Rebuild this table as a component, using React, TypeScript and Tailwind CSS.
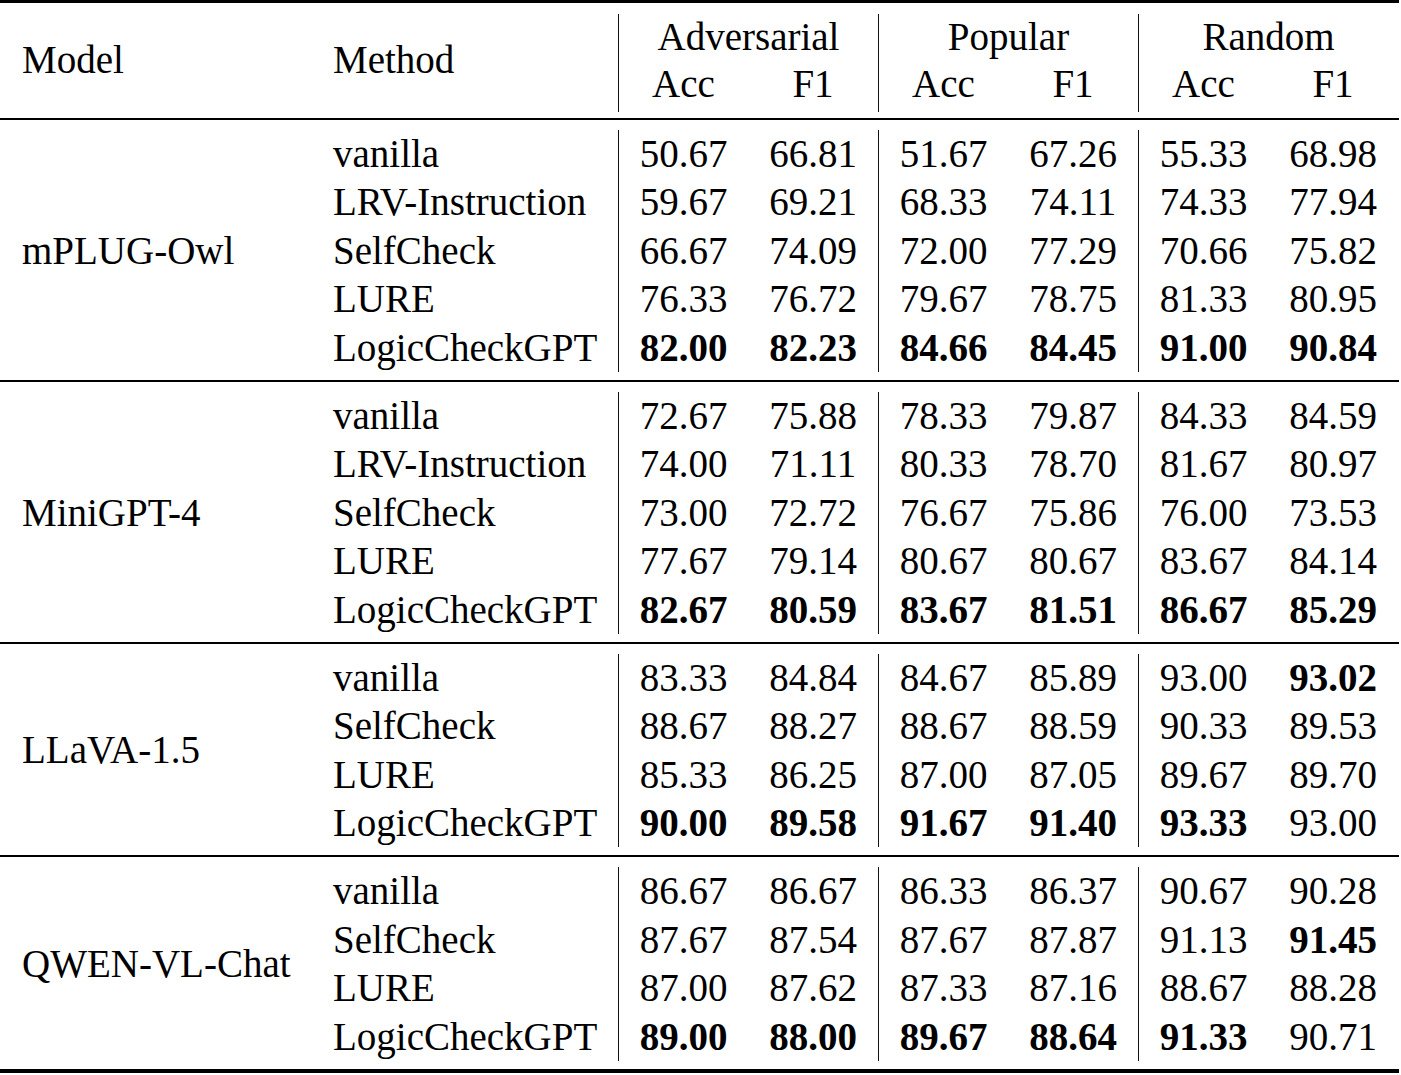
const groups: { model: string; rows: [string, string[]][] }[] = [
  {
    model: "mPLUG-Owl",
    rows: [
      ["vanilla", ["50.67", "66.81", "51.67", "67.26", "55.33", "68.98"]],
      ["LRV-Instruction", ["59.67", "69.21", "68.33", "74.11", "74.33", "77.94"]],
      ["SelfCheck", ["66.67", "74.09", "72.00", "77.29", "70.66", "75.82"]],
      ["LURE", ["76.33", "76.72", "79.67", "78.75", "81.33", "80.95"]],
      ["LogicCheckGPT", ["*82.00", "*82.23", "*84.66", "*84.45", "*91.00", "*90.84"]],
    ],
  },
  {
    model: "MiniGPT-4",
    rows: [
      ["vanilla", ["72.67", "75.88", "78.33", "79.87", "84.33", "84.59"]],
      ["LRV-Instruction", ["74.00", "71.11", "80.33", "78.70", "81.67", "80.97"]],
      ["SelfCheck", ["73.00", "72.72", "76.67", "75.86", "76.00", "73.53"]],
      ["LURE", ["77.67", "79.14", "80.67", "80.67", "83.67", "84.14"]],
      ["LogicCheckGPT", ["*82.67", "*80.59", "*83.67", "*81.51", "*86.67", "*85.29"]],
    ],
  },
  {
    model: "LLaVA-1.5",
    rows: [
      ["vanilla", ["83.33", "84.84", "84.67", "85.89", "93.00", "*93.02"]],
      ["SelfCheck", ["88.67", "88.27", "88.67", "88.59", "90.33", "89.53"]],
      ["LURE", ["85.33", "86.25", "87.00", "87.05", "89.67", "89.70"]],
      ["LogicCheckGPT", ["*90.00", "*89.58", "*91.67", "*91.40", "*93.33", "93.00"]],
    ],
  },
  {
    model: "QWEN-VL-Chat",
    rows: [
      ["vanilla", ["86.67", "86.67", "86.33", "86.37", "90.67", "90.28"]],
      ["SelfCheck", ["87.67", "87.54", "87.67", "87.87", "91.13", "*91.45"]],
      ["LURE", ["87.00", "87.62", "87.33", "87.16", "88.67", "88.28"]],
      ["LogicCheckGPT", ["*89.00", "*88.00", "*89.67", "*88.64", "*91.33", "90.71"]],
    ],
  },
];

const cols = "grid grid-cols-[311px_307px_repeat(6,130px)]";

function Group({ model, rows }: { model: string; rows: [string, string[]][] }) {
  return (
    <div className="border-t-2 border-black pt-[10px] pb-[8px]">
      <div className={cols} style={{ gridTemplateRows: `repeat(${rows.length}, 48.4px)` }}>
        <div className="pl-[22px] flex items-center" style={{ gridRow: `1 / span ${rows.length}` }}>
          {model}
        </div>
        {rows.map(([method, vals], r) => (
          <div key={method} className="contents">
            <div className="pl-[22px]" style={{ gridRow: r + 1, gridColumn: 2 }}>
              {method}
            </div>
            {vals.map((v, i) => (
              <div
                key={i}
                className={`text-center ${i % 2 === 0 ? "border-l border-[#111]" : ""} ${v.startsWith("*") ? "font-bold" : ""}`}
                style={{ gridRow: r + 1, gridColumn: i + 3 }}
              >
                {v.replace("*", "")}
              </div>
            ))}
          </div>
        ))}
      </div>
    </div>
  );
}

export default function App() {
  return (
    <div className="bg-white w-[1401px] h-[1075px] text-black text-[39px] leading-[48.4px] font-[family-name:'Liberation_Serif',serif]">
      <div className="w-[1399px] border-t-[3px] border-black">
        {/* Header */}
        <div className="pt-[11px] pb-[6px]">
          <div className={`${cols} grid-rows-[45px_53px]`}>
            <div className="row-span-2 pl-[22px] pb-[6px] flex items-center">Model</div>
            <div className="row-span-2 pl-[22px] pb-[6px] flex items-center">Method</div>
            {["Adversarial", "Popular", "Random"].map((g) => (
              <div key={g} className="col-span-2 text-center border-l border-[#111] leading-[45px]">
                {g}
              </div>
            ))}
            {[0, 1, 2].map((i) => (
              <div key={i} className="contents">
                <div className="text-center border-l border-[#111] leading-[49px]">Acc</div>
                <div className="text-center leading-[49px]">F1</div>
              </div>
            ))}
          </div>
        </div>

        {groups.map((g) => (
          <Group key={g.model} model={g.model} rows={g.rows} />
        ))}

        <div className="border-t-4 border-black" />
      </div>
    </div>
  );
}
